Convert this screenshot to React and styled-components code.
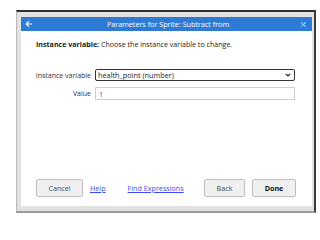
import React from 'react';
import styled, { createGlobalStyle } from 'styled-components';

const GlobalStyle = createGlobalStyle`
  html, body {
    margin: 0;
    padding: 0;
    background: #ffffff;
  }
  body {
    font-family: 'Open Sans', 'Noto Sans', sans-serif;
  }
`;

const Page = styled.div`
  width: 320px;
  height: 240px;
  padding: 10px 0 0 16px;
  box-sizing: border-box;
`;

const Dialog = styled.div`
  width: 300px;
  height: 203px;
  box-sizing: border-box;
  display: flex;
  flex-direction: column;
  background: #e2e2e2;
  border-top: 2px solid #2e2e2e;
  border-right: 2px solid #3a3a3a;
  border-bottom: 2px solid #9a9a9a;
  border-left: 1px solid #b8b8b8;
  padding: 5px 2px 5px 4px;
`;

const TitleBar = styled.div`
  height: 14px;
  flex-shrink: 0;
  display: flex;
  align-items: center;
  background: #2d7bd4;
  color: #ffffff;
  padding: 0 6px 0 4px;
`;

const Title = styled.div`
  flex: 1;
  text-align: center;
  font-size: 7.2px;
  line-height: 14px;
  padding-left: 2px;
`;

const Body = styled.div`
  flex: 1;
  display: flex;
  flex-direction: column;
  background: #ffffff;
  padding: 8px 16px 9px 15px;
  color: #222222;
`;

const Heading = styled.p`
  margin: 0;
  font-size: 7.1px;
  line-height: 11px;
  white-space: nowrap;

  b {
    font-weight: 700;
  }
`;

const Form = styled.div`
  margin-top: 19px;
  display: grid;
  grid-template-columns: 55px 200px;
  column-gap: 4px;
  row-gap: 6px;
  align-items: center;
`;

const Label = styled.div`
  display: flex;
  justify-content: flex-end;
  white-space: nowrap;
  font-size: 7px;
  color: #333333;
`;

const SelectBox = styled.div`
  height: 12px;
  box-sizing: border-box;
  border: 1px solid #333333;
  border-radius: 2px;
  display: flex;
  align-items: center;
  justify-content: space-between;
  padding: 0 3px 0 2px;
  font-size: 7.3px;
  color: #222222;
`;

const InputBox = styled.div`
  height: 13px;
  box-sizing: border-box;
  border: 1px solid #cfcfcf;
  display: flex;
  align-items: center;
  padding: 0 3px;
  font-size: 7.3px;
  color: ${(p) => p.$color || '#222222'};
`;

const Footer = styled.div`
  margin-top: auto;
  display: flex;
  align-items: center;
`;

const Button = styled.button`
  height: 18px;
  width: ${(p) => p.$width}px;
  box-sizing: border-box;
  padding: 0;
  background: #f0f0f0;
  border: 1px solid #bdbdbd;
  border-radius: 2px;
  font-family: 'Open Sans', 'Noto Sans', sans-serif;
  font-size: 7.2px;
  font-weight: ${(p) => (p.$bold ? 700 : 400)};
  color: ${(p) => (p.$bold ? '#111111' : '#4a4a4a')};
  margin-left: ${(p) => p.$gap || 0}px;
`;

const Link = styled.a`
  font-size: 7.2px;
  color: #3b4cf0;
  text-decoration: underline;
  margin-left: ${(p) => p.$gap}px;
`;

const Spacer = styled.div`
  flex: 1;
`;

export default function App() {
  return (
    <Page>
      <GlobalStyle />
      <Dialog>
        <TitleBar>
          <svg width="8" height="8" viewBox="0 0 8 8">
            <path d="M7 4H1.5M4 1.2L1.2 4L4 6.8" stroke="#fff" strokeWidth="1.1" fill="none" />
          </svg>
          <Title>Parameters for Sprite: Subtract from</Title>
          <svg width="5" height="5" viewBox="0 0 5 5">
            <path d="M0.5 0.5L4.5 4.5M4.5 0.5L0.5 4.5" stroke="#fff" strokeWidth="1" />
          </svg>
        </TitleBar>
        <Body>
          <Heading>
            <b>Instance variable:</b> Choose the instance variable to change.
          </Heading>
          <Form>
            <Label>Instance variable</Label>
            <SelectBox>
              <span>health_point (number)</span>
              <svg width="6" height="4" viewBox="0 0 6 4">
                <path d="M0.8 0.8L3 3L5.2 0.8" stroke="#222" strokeWidth="1.2" fill="none" />
              </svg>
            </SelectBox>
            <Label>Value</Label>
            <InputBox $color="#a030c0">1</InputBox>
          </Form>
          <Footer>
            <Button $width={47}>Cancel</Button>
            <Link $gap={7}>Help</Link>
            <Link $gap={22}>Find Expressions</Link>
            <Spacer />
            <Button $width={41}>Back</Button>
            <Button $width={44} $gap={7} $bold>Done</Button>
          </Footer>
        </Body>
      </Dialog>
    </Page>
  );
}
